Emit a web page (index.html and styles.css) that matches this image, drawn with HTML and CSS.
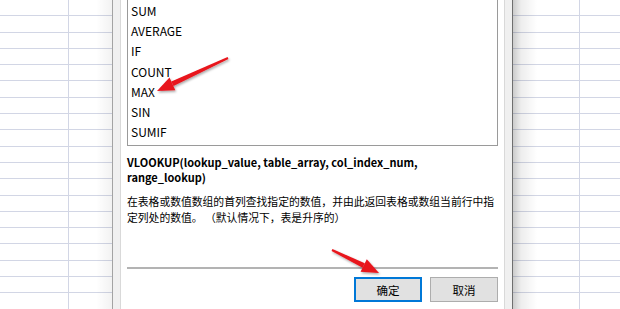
FILE: index.html
```html
<!DOCTYPE html>
<html lang="zh-CN">
<head>
    <meta charset="UTF-8">
    <meta name="viewport" content="width=device-width, initial-scale=1.0">
    <title>插入函数</title>
    <link rel="stylesheet" href="styles.css">
</head>
<body>
    <div class="screen">
        <div class="sheet sheet-left"></div>
        <div class="dialog">
            <div class="dialog-body">
                <ul class="func-list">
                    <li>SUM</li>
                    <li>AVERAGE</li>
                    <li>IF</li>
                    <li>COUNT</li>
                    <li>MAX</li>
                    <li>SIN</li>
                    <li>SUMIF</li>
                </ul>
                <p class="func-sig">VLOOKUP(lookup_value, table_array, col_index_num, range_lookup)</p>
                <p class="func-desc">在表格或数值数组的首列查找指定的数值，并由此返回表格或数组当前行中指定列处的数值。 （默认情况下，表是升序的）</p>
                <div class="spacer"></div>
                <div class="separator"></div>
                <div class="buttons">
                    <button class="btn btn-default">确定</button>
                    <button class="btn">取消</button>
                </div>
            </div>
        </div>
        <div class="sheet sheet-right"></div>

        <!-- 标注箭头 -->
        <svg class="arrows" width="620" height="309" viewBox="0 0 620 309">
            <defs>
                <filter id="shadow" x="-20%" y="-20%" width="140%" height="140%">
                    <feDropShadow dx="1" dy="1.5" stdDeviation="1.2" flood-color="#000" flood-opacity="0.35"/>
                </filter>
            </defs>
            <g fill="#e8141c" filter="url(#shadow)">
                <polygon points="228.4,58.9 227.6,57.1 171.3,81.5 173.5,86.1"/>
                <polygon points="157,91 175.3,90.2 169.5,77.4"/>
                <polygon points="331.6,250.9 332.4,249.1 364.8,263.3 362.6,267.7"/>
                <polygon points="379,273 360.6,271.8 366.8,259.2"/>
            </g>
        </svg>
    </div>
</body>
</html>
```

FILE: styles.css
```css
body {
    margin: 0;
    padding: 0;
    background: #ffffff;
    font-family: "Microsoft YaHei", "Noto Sans CJK SC", sans-serif;
    color: #000;
}
.screen {
    position: relative;
    display: flex;
    width: 620px;
    height: 309px;
    overflow: hidden;
}
.sheet {
    background-color: #ffffff;
}
.sheet-left {
    width: 112px;
    background-image:
        linear-gradient(to right, rgba(0, 0, 0, 0) 96px, rgba(0, 0, 0, 0.05) 112px),
        linear-gradient(to right, transparent 68px, #d2d6e5 68px, #d2d6e5 69px, transparent 69px),
        repeating-linear-gradient(to bottom, transparent 0, transparent 15.3px, #d2d6e5 15.3px, #d2d6e5 16.3px);
}
.sheet-right {
    flex: 1;
    background-image:
        linear-gradient(to right, rgba(0, 0, 0, 0.2), rgba(0, 0, 0, 0.07) 8px, rgba(0, 0, 0, 0) 24px),
        linear-gradient(to right, transparent 66px, #d2d6e5 66px, #d2d6e5 67px, transparent 67px),
        repeating-linear-gradient(to bottom, transparent 0, transparent 15.3px, #d2d6e5 15.3px, #d2d6e5 16.3px);
}
.dialog {
    width: 385px;
    padding: 0 7px;
    background: #f0f0f0;
    border-left: 1px solid #a3a3a3;
    border-right: 1px solid #6f6f6f;
    display: flex;
}
.dialog-body {
    flex: 1;
    display: flex;
    flex-direction: column;
    background: #ffffff;
    border-left: 1px solid #d9d9d9;
    border-right: 1px solid #d9d9d9;
    padding: 0 6px 7px 6px;
}
.func-list {
    list-style: none;
    margin: 0;
    padding: 1px 0 3px 3px;
    border: 1px solid #9a9a9a;
    border-top: none;
    font-size: 12px;
}
.func-list li {
    height: 20.2px;
    line-height: 20.2px;
}
.func-sig {
    margin: 9px 0 0 0;
    font-size: 11px;
    font-weight: bold;
    line-height: 15px;
}
.func-desc {
    margin: 8px 0 0 0;
    font-size: 10.8px;
    line-height: 16px;
}
.spacer {
    flex: 1;
}
.separator {
    height: 2px;
    background: #b3b3b3;
}
.buttons {
    display: flex;
    justify-content: flex-end;
    gap: 8px;
    margin-top: 8px;
}
.btn {
    width: 68px;
    height: 25px;
    padding: 0;
    font-family: "Microsoft YaHei", "Noto Sans CJK SC", sans-serif;
    font-size: 11.5px;
    color: #000;
    background: #e1e1e1;
    border: 1px solid #adadad;
}
.btn-default {
    border: 1px solid #0078d7;
    box-shadow: inset 0 0 0 1px #0078d7;
}
.arrows {
    position: absolute;
    left: 0;
    top: 0;
}
```
